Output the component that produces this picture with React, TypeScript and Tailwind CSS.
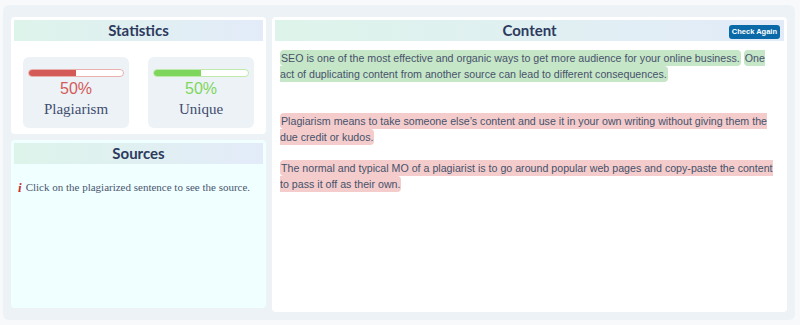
import React from "react";

const serif = { fontFamily: '"Liberation Serif", "DejaVu Serif", serif' };

function Header({ title, children }: { title: string; children?: React.ReactNode }) {
  return (
    <div className="relative h-[21px] flex items-center justify-center bg-gradient-to-r from-[#ddf4ea] to-[#e3ebf9]">
      <span className="font-['Lato',sans-serif] font-bold text-[15px] text-[#2d3a5e] leading-none">{title}</span>
      {children}
    </div>
  );
}

function StatBox({ label, color, track, border, pct }: { label: string; color: string; track: string; border: string; pct: number }) {
  return (
    <div className="w-[106px] h-[71px] rounded-md bg-[#edf2f7] flex flex-col items-center pt-[12px]">
      <div className={`w-[96px] h-[8px] rounded-full border ${border} ${track} overflow-hidden`}>
        <div className={`h-full ${color}`} style={{ width: `${pct}%` }} />
      </div>
      <div className={`mt-[2px] text-[16px] leading-[20px] font-['Liberation_Sans',Arial,sans-serif] ${label === "Plagiarism" ? "text-[#d45a57]" : "text-[#7fd65c]"}`}>
        {pct}%
      </div>
      <div style={serif} className="text-[15px] leading-[20px] text-[#3f4d6e]">{label}</div>
    </div>
  );
}

export default function App() {
  return (
    <div className="w-[800px] h-[325px] bg-[#f8f9fa] pt-[5px] pl-[3px]">
      <div className="w-[792px] h-[315px] rounded-md bg-[#edf2f7] pl-[8px] pr-[8px] pt-[12px] pb-[8px] flex gap-[6px]">
        <div className="w-[255px] flex flex-col gap-[6px]">
          <div className="h-[117px] bg-white rounded-sm p-[3px]">
            <Header title="Statistics" />
            <div className="flex justify-between px-[9px] mt-[16px]">
              <StatBox label="Plagiarism" pct={50} color="bg-[#d45a57]" track="bg-white" border="border-[#eab0ae]" />
              <StatBox label="Unique" pct={50} color="bg-[#7fd65c]" track="bg-white" border="border-[#bfe9ad]" />
            </div>
          </div>
          <div className="flex-1 mb-[4px] bg-[#f0ffff] rounded-sm p-[3px]">
            <Header title="Sources" />
            <div className="mt-[15px] pl-[4px] flex items-center gap-[4px] text-[11px] text-[#4a5670]" style={serif}>
              <span className="text-[#c9302c] italic font-bold text-[13px] leading-none">i</span>
              <span>Click on the plagiarized sentence to see the source.</span>
            </div>
          </div>
        </div>
        <div className="flex-1 bg-white rounded-sm p-[3px]">
          <Header title="Content">
            <button className="absolute right-[4px] top-[5px] h-[14px] px-[3px] rounded-[3px] bg-[#0a6aa8] text-white text-[7.5px] font-semibold font-['Liberation_Sans',Arial,sans-serif] leading-none">
              Check Again
            </button>
          </Header>
          <div className="px-[5px] pt-[9px] text-[10.65px] leading-[16px] text-[#46526b] font-['Liberation_Sans',Arial,sans-serif]">
            <p className="mb-[31px]">
              <span className="bg-[#c6e6c8] rounded-sm px-[1px] py-[2px]">SEO is one of the most effective and organic ways to get more audience for your online business.</span>{" "}
              <span className="bg-[#c6e6c8] rounded-sm px-[1px] py-[2px]">One act of duplicating content from another source can lead to different consequences.</span>
            </p>
            <p className="mb-[15px]">
              <span className="bg-[#f4cccc] rounded-sm px-[1px] py-[2px]">Plagiarism means to take someone else’s content and use it in your own writing without giving them the due credit or kudos.</span>
            </p>
            <p>
              <span className="bg-[#f4cccc] rounded-sm px-[1px] py-[2px]">The normal and typical MO of a plagiarist is to go around popular web pages and copy-paste the content to pass it off as their own.</span>
            </p>
          </div>
        </div>
      </div>
    </div>
  );
}
